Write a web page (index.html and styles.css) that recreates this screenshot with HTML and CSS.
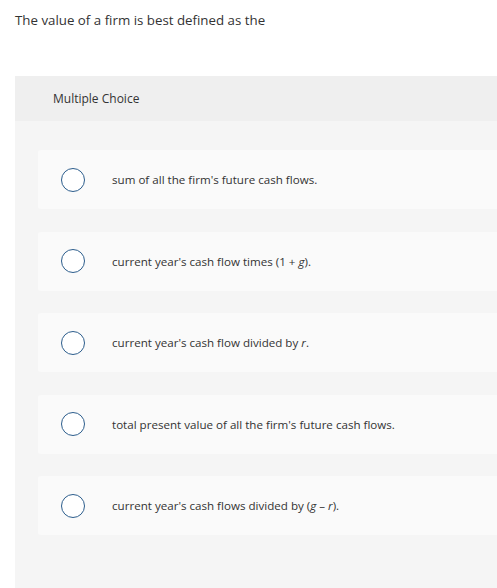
FILE: index.html
```html
<!DOCTYPE html>
<html>
<head>
<meta charset="utf-8">
<link rel="stylesheet" href="styles.css">
</head>
<body>
<p class="question">The value of a firm is best defined as the</p>
<div class="panel">
  <div class="panel-head">Multiple Choice</div>
  <div class="options">
    <div class="option"><span class="radio"></span><span class="label">sum of all the firm's future cash flows.</span></div>
    <div class="option"><span class="radio"></span><span class="label">current year's cash flow times (1 + <i>g</i>).</span></div>
    <div class="option"><span class="radio"></span><span class="label">current year's cash flow divided by <i>r</i>.</span></div>
    <div class="option"><span class="radio"></span><span class="label">total present value of all the firm's future cash flows.</span></div>
    <div class="option"><span class="radio"></span><span class="label">current year's cash flows divided by (<i>g</i> – <i>r</i>).</span></div>
  </div>
</div>
</body>
</html>
```
FILE: styles.css
```css
html, body { margin: 0; padding: 0; background: #fff; }
body { font-family: "Open Sans", Lato, sans-serif; color: #333; overflow: hidden; font-variant-ligatures: none; }
.question { margin: 0; padding: 11px 0 0 15px; font-size: 13.3px; line-height: 18px; color: #333; height: 76px; box-sizing: border-box; }
.panel { margin-left: 15px; background: #f5f5f5; min-height: 540px; }
.panel-head { background: #efefef; height: 45px; padding-left: 38px; display: flex; align-items: center; font-size: 12px; color: #333; }
.options { padding: 29px 0 0 23px; display: flex; flex-direction: column; gap: 22.5px; }
.option { background: #fafafa; height: 59px; border-radius: 3px 0 0 3px; display: flex; align-items: center; padding-left: 23px; }
.radio { width: 22px; height: 22px; border: 1.5px solid #2c5d8c; border-radius: 50%; background: #fff; flex: none; }
.label { margin-left: 27px; font-size: 11.6px; color: #333; }
.label i { font-style: italic; }
```
